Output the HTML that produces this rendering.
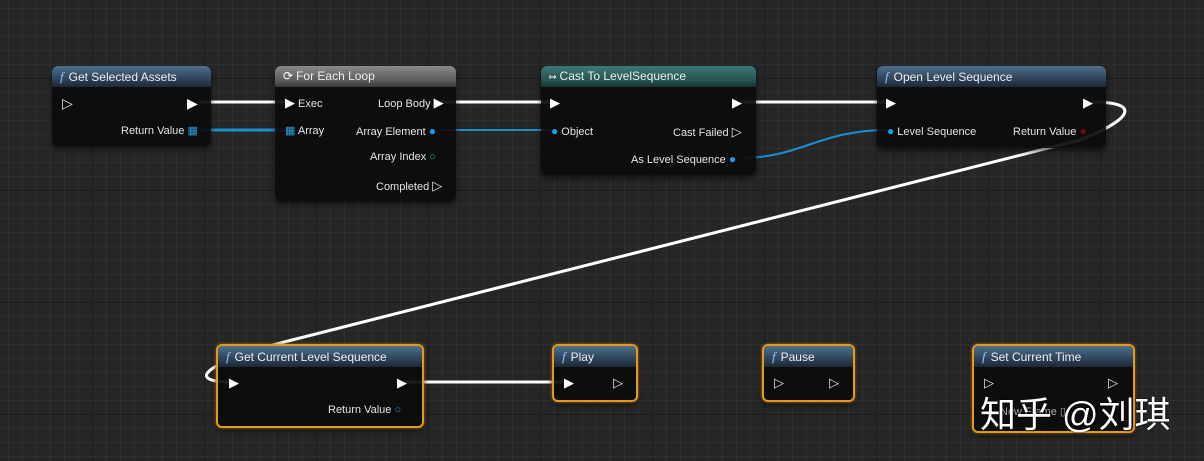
<!DOCTYPE html>
<html><head><meta charset="utf-8"><style>
*{margin:0;padding:0;box-sizing:border-box}
body{width:1204px;height:461px;overflow:hidden;position:relative;font-family:"Liberation Sans",sans-serif;
background-color:#262626;
background-image:
linear-gradient(to right,#1b1b1b 0 1px,transparent 1px),
linear-gradient(to bottom,#1b1b1b 0 1px,transparent 1px),
linear-gradient(to right,#2f2f2f 0 1px,transparent 1px),
linear-gradient(to bottom,#2f2f2f 0 1px,transparent 1px);
background-size:112px 112px,112px 112px,14px 14px,14px 14px;
background-position:92px 0,0 78px,8px 0,0 8px;}
.n{position:absolute;background:rgba(12,12,12,.93);border-radius:6px;box-shadow:0 3px 6px rgba(0,0,0,.6);color:#e6e6e6;font-size:11px}
.h{height:21px;border-radius:6px 6px 0 0;padding-left:8px;line-height:21px;font-size:12px;color:#eee;white-space:nowrap}
.fb{background:linear-gradient(#4d6f8c,#2a3d52 70%,#1c2835)}
.gr{background:linear-gradient(#8a8a8a,#5a5a5a 70%,#3a3a3a)}
.tl{background:linear-gradient(#3c7a78,#25504f 70%,#183433)}
.f{font-style:italic;font-family:"Liberation Serif",serif;color:#8fc3ff;margin-right:5px;font-weight:normal;font-size:13px}
.sel{border:2px solid #e39a22;box-shadow:0 0 3px #b06a10,0 3px 6px rgba(0,0,0,.6)}
.t{position:absolute;white-space:nowrap;font-size:11px;color:#e4e4e4}
svg{position:absolute;left:0;top:0}
</style></head><body>
<svg width="1204" height="461" style="z-index:0">
<path d="M200 102 H286" stroke="#fff" stroke-width="3" fill="none"/>
<path d="M200 130 H286" stroke="#1b8fd0" stroke-width="3" fill="none"/>
<path d="M441 102 H552" stroke="#fff" stroke-width="3" fill="none"/>
<path d="M441 130 H552" stroke="#1b8fd0" stroke-width="2" fill="none"/>
<path d="M741 102 H888" stroke="#fff" stroke-width="3" fill="none"/>
<path d="M741 158 C800 158 820 130 888 130" stroke="#1b8fd0" stroke-width="2" fill="none"/>
<path d="M1092 102 C1140 102 1135 118 1080 140 L300 338 C210 360 180 382 232 382" stroke="#fff" stroke-width="3" fill="none"/>
<path d="M404 382 H566" stroke="#fff" stroke-width="3" fill="none"/>
</svg>
<div style="position:relative;z-index:1">
<div class="n" style="left:52px;top:66px;width:159px;height:80px"><div class="h fb"><span class="f">f</span>Get Selected Assets</div></div>
<div class="t" style="left:62px;top:95px;font-size:14px">▷</div>
<div class="t" style="left:187px;top:95px;font-size:14px;color:#fff">▶</div>
<div class="t" style="left:121px;top:124px">Return Value <span style="color:#2a9ee0">▦</span></div>
<div class="n" style="left:275px;top:66px;width:181px;height:135px"><div class="h gr"><span style="color:#fff;margin-right:3px">⟳</span>For Each Loop</div></div>
<div class="t" style="left:285px;top:95px"><span style="font-size:13px;color:#fff">▶</span> Exec</div>
<div class="t" style="left:285px;top:124px"><span style="color:#2a9ee0">▦</span> Array</div>
<div class="t" style="left:378px;top:95px">Loop Body <span style="font-size:13px;color:#fff">▶</span></div>
<div class="t" style="left:356px;top:124px">Array Element <span style="color:#1b9be6;font-size:12px">●</span></div>
<div class="t" style="left:370px;top:151px">Array Index <span style="color:#2fbf8a">○</span></div>
<div class="t" style="left:376px;top:178px">Completed <span style="font-size:13px">▷</span></div>
<div class="n" style="left:541px;top:66px;width:215px;height:109px"><div class="h tl"><span style="color:#fff;margin-right:3px;font-size:9px">↦</span>Cast To LevelSequence</div></div>
<div class="t" style="left:550px;top:95px;font-size:13px;color:#fff">▶</div>
<div class="t" style="left:732px;top:95px;font-size:13px;color:#fff">▶</div>
<div class="t" style="left:551px;top:124px"><span style="color:#1b9be6;font-size:12px">●</span> Object</div>
<div class="t" style="left:673px;top:124px">Cast Failed <span style="font-size:13px">▷</span></div>
<div class="t" style="left:631px;top:152px">As Level Sequence <span style="color:#1b9be6;font-size:12px">●</span></div>
<div class="n" style="left:877px;top:66px;width:229px;height:82px"><div class="h fb"><span class="f">f</span>Open Level Sequence</div></div>
<div class="t" style="left:886px;top:95px;font-size:13px;color:#fff">▶</div>
<div class="t" style="left:1083px;top:95px;font-size:13px;color:#fff">▶</div>
<div class="t" style="left:887px;top:124px"><span style="color:#1b9be6;font-size:12px">●</span> Level Sequence</div>
<div class="t" style="left:1013px;top:124px">Return Value <span style="color:#7a0a0a;font-size:12px">●</span></div>
<div class="n sel" style="left:216px;top:344px;width:208px;height:84px"><div class="h fb" style="border-radius:4px 4px 0 0"><span class="f">f</span>Get Current Level Sequence</div></div>
<div class="t" style="left:229px;top:375px;font-size:13px;color:#fff">▶</div>
<div class="t" style="left:397px;top:375px;font-size:13px;color:#fff">▶</div>
<div class="t" style="left:328px;top:404px">Return Value <span style="color:#1b9be6">○</span></div>
<div class="n sel" style="left:552px;top:344px;width:86px;height:58px"><div class="h fb" style="border-radius:4px 4px 0 0"><span class="f">f</span>Play</div></div>
<div class="t" style="left:564px;top:375px;font-size:13px;color:#fff">▶</div>
<div class="t" style="left:613px;top:375px;font-size:13px">▷</div>
<div class="n sel" style="left:762px;top:344px;width:93px;height:58px"><div class="h fb" style="border-radius:4px 4px 0 0"><span class="f">f</span>Pause</div></div>
<div class="t" style="left:774px;top:375px;font-size:13px">▷</div>
<div class="t" style="left:829px;top:375px;font-size:13px">▷</div>
<div class="n sel" style="left:972px;top:344px;width:163px;height:89px"><div class="h fb" style="border-radius:4px 4px 0 0"><span class="f">f</span>Set Current Time</div></div>
<div class="t" style="left:984px;top:375px;font-size:13px">▷</div>
<div class="t" style="left:1108px;top:375px;font-size:13px">▷</div>
<div class="t" style="left:1000px;top:405px;color:#aaa">New Frame ▯</div>
<div class="t" style="left:980px;top:386px;font-size:36px;color:#fff;font-family:'Liberation Sans','Noto Sans CJK SC',sans-serif;text-shadow:0 0 2px #000">知乎 @刘琪</div>
</div>
</body></html>
